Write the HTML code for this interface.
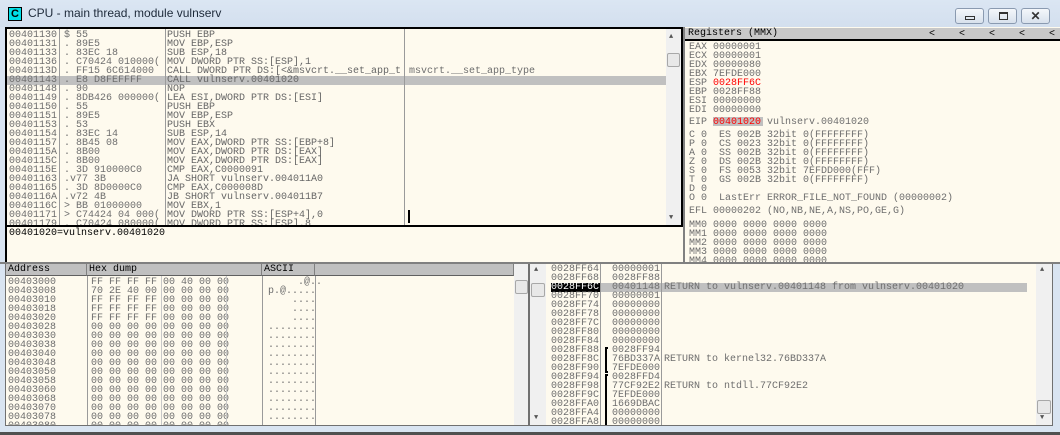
<!DOCTYPE html><html><head><style>
*{margin:0;padding:0;box-sizing:border-box}
body{width:1060px;height:435px;background:#d9e4f1;position:relative;overflow:hidden;font-family:"Liberation Mono",monospace;font-size:10px;color:#707070}
.abs{position:absolute}
.pane{position:absolute;background:#fefaee;overflow:hidden}
pre{font-family:"Liberation Mono",monospace;font-size:10px;line-height:9px;white-space:pre;position:absolute;color:#6e6e6e}
.vl{position:absolute;width:1px;background:#9a9a9a}
.sb{position:absolute;background:#f0f0f0}
.thumb{position:absolute;background:#e8e8e8;border:1px solid #a8a8a8;border-radius:2px}
.hdr{position:absolute;background:#c0c0c0;height:12px;top:0;border-right:1px solid #808080;border-bottom:1px solid #606060;font-size:10px;line-height:11px;color:#000;padding-left:2px}
.tb{position:absolute;top:8px;width:29px;height:16px;border:1px solid #8a9ab0;border-radius:3px;background:linear-gradient(#f4f7fb,#d8e1ec)}
</style></head><body>
<div class="abs" style="left:0;top:0;width:1060px;height:27px;background:linear-gradient(#dbe6f3,#d3dfee)"></div>
<div class="abs" style="left:8px;top:7px;width:14px;height:14px;background:#00e0e8;border:1px solid #000;font:bold 11px 'Liberation Sans',sans-serif;color:#000;text-align:center;line-height:12px">C</div>
<div class="abs" style="left:28px;top:6px;font:12px 'Liberation Sans',sans-serif;color:#1e2a3a">CPU - main thread, module vulnserv</div>
<div class="tb" style="left:955px"><div class="abs" style="left:9px;top:7px;width:10px;height:4px;border:1px solid #333"></div></div>
<div class="tb" style="left:988px"><div class="abs" style="left:10px;top:3px;width:9px;height:8px;border:1px solid #333;border-top-width:2px"></div></div>
<div class="tb" style="left:1021px;font:bold 12px 'Liberation Sans';color:#333;text-align:center;line-height:14px">✕</div>

<!-- disasm -->
<div class="pane" style="left:5px;top:27px;width:678px;height:200px;border:2px solid #000">
<div class="abs" style="left:0;top:47px;width:660px;height:9px;background:#c0c0c0"></div>
<pre style="left:2px;top:2px">00401130
00401131
00401133
00401136
0040113D
00401143
00401148
00401149
00401150
00401151
00401153
00401154
00401157
0040115A
0040115C
0040115E
00401163
00401165
0040116A
0040116C
00401171
00401179</pre>
<div class="vl" style="left:52px;top:0;height:200px"></div>
<pre style="left:57px;top:2px">$ 55
. 89E5
. 83EC 18
. C70424 010000(
. FF15 6C614000
. E8 D8FEFFFF
. 90
. 8DB426 000000(
. 55
. 89E5
. 53
. 83EC 14
. 8B45 08
. 8B00
. 8B00
. 3D 910000C0
.v77 3B
. 3D 8D0000C0
.v72 4B
&gt; BB 01000000
&gt; C74424 04 000(
. C70424 080000(</pre>
<div class="vl" style="left:158px;top:0;height:200px"></div>
<pre style="left:160px;top:2px;color:#666">PUSH EBP
MOV EBP,ESP
SUB ESP,18
MOV DWORD PTR SS:[ESP],1
CALL DWORD PTR DS:[&lt;&amp;msvcrt.__set_app_t
CALL vulnserv.00401020
NOP
LEA ESI,DWORD PTR DS:[ESI]
PUSH EBP
MOV EBP,ESP
PUSH EBX
SUB ESP,14
MOV EAX,DWORD PTR SS:[EBP+8]
MOV EAX,DWORD PTR DS:[EAX]
MOV EAX,DWORD PTR DS:[EAX]
CMP EAX,C0000091
JA SHORT vulnserv.004011A0
CMP EAX,C000008D
JB SHORT vulnserv.004011B7
MOV EBX,1
MOV DWORD PTR SS:[ESP+4],0
MOV DWORD PTR SS:[ESP],8</pre>
<div class="vl" style="left:397px;top:0;height:200px"></div>
<pre style="left:402px;top:38px">msvcrt.__set_app_type</pre>
<div class="abs" style="left:401px;top:181px;width:2px;height:13px;background:#000"></div>
<div class="sb" style="left:659px;top:0;width:15px;height:196px"></div>
<div class="abs" style="left:662px;top:4px;color:#555;font-size:7px">▲</div>
<div class="thumb" style="left:660px;top:24px;width:13px;height:14px"></div>
<div class="abs" style="left:662px;top:185px;color:#555;font-size:7px">▼</div>
</div>
<div class="pane" style="left:5px;top:227px;width:678px;height:35px;border-left:2px solid #000">
<pre style="left:2px;top:2px;color:#000">00401020=vulnserv.00401020</pre>
</div>

<!-- registers -->
<div class="pane" style="left:683px;top:27px;width:377px;height:235px;border-left:2px solid #808080">
<div class="abs" style="left:0;top:1px;width:377px;height:13px;background:#c8c8c8;border-bottom:2px solid #000;color:#000;line-height:12px;padding-left:3px">Registers (MMX)</div>
<pre style="left:244px;top:3px;color:#000">&lt;    &lt;    &lt;    &lt;    &lt;</pre>
<pre style="left:4px;top:16px">EAX 00000001
ECX 00000001
EDX 00000080
EBX 7EFDE000
ESP <span style="color:#f00">0028FF6C</span>
EBP 0028FF88
ESI 00000000
EDI 00000000</pre>
<div class="abs" style="left:28px;top:90px;width:50px;height:9px;background:#c0c0c0"></div>
<pre style="left:4px;top:91px">EIP <span style="color:#f00">00401020</span> vulnserv.00401020</pre>
<pre style="left:4px;top:104px">C 0  ES 002B 32bit 0(FFFFFFFF)
P 0  CS 0023 32bit 0(FFFFFFFF)
A 0  SS 002B 32bit 0(FFFFFFFF)
Z 0  DS 002B 32bit 0(FFFFFFFF)
S 0  FS 0053 32bit 7EFDD000(FFF)
T 0  GS 002B 32bit 0(FFFFFFFF)
D 0
O 0  LastErr ERROR_FILE_NOT_FOUND (00000002)</pre>
<pre style="left:4px;top:180px">EFL 00000202 (NO,NB,NE,A,NS,PO,GE,G)</pre>
<pre style="left:4px;top:194px">MM0 0000 0000 0000 0000
MM1 0000 0000 0000 0000
MM2 0000 0000 0000 0000
MM3 0000 0000 0000 0000
MM4 0000 0000 0000 0000</pre>
</div>
<div class="abs" style="left:0;top:262px;width:1060px;height:2px;background:#808080"></div>

<!-- dump -->
<div class="pane" style="left:5px;top:264px;width:524px;height:162px;border:1px solid #707070;border-top:none">
<div class="hdr" style="left:0;width:81px">Address</div>
<div class="hdr" style="left:81px;width:175px">Hex dump</div>
<div class="hdr" style="left:256px;width:53px">ASCII</div>
<div class="hdr" style="left:309px;width:199px"></div>
<pre style="left:2px;top:14px">00403000
00403008
00403010
00403018
00403020
00403028
00403030
00403038
00403040
00403048
00403050
00403058
00403060
00403068
00403070
00403078
00403080</pre>
<div class="vl" style="left:81px;top:12px;height:150px"></div>
<pre style="left:85px;top:14px">FF FF FF FF 00 40 00 00
70 2E 40 00 00 00 00 00
FF FF FF FF 00 00 00 00
FF FF FF FF 00 00 00 00
FF FF FF FF 00 00 00 00
00 00 00 00 00 00 00 00
00 00 00 00 00 00 00 00
00 00 00 00 00 00 00 00
00 00 00 00 00 00 00 00
00 00 00 00 00 00 00 00
00 00 00 00 00 00 00 00
00 00 00 00 00 00 00 00
00 00 00 00 00 00 00 00
00 00 00 00 00 00 00 00
00 00 00 00 00 00 00 00
00 00 00 00 00 00 00 00
00 00 00 00 00 00 00 00</pre>
<div class="vl" style="left:155px;top:12px;height:150px;background:#c8c8c8"></div>
<div class="vl" style="left:220px;top:12px;height:150px;background:#c8c8c8"></div>
<div class="vl" style="left:256px;top:12px;height:150px"></div>
<pre style="left:262px;top:14px">     .@..
p.@.....
    ....
    ....
    ....
........
........
........
........
........
........
........
........
........
........
........</pre>
<div class="vl" style="left:309px;top:12px;height:150px"></div>
<div class="sb" style="left:508px;top:0;width:15px;height:162px"></div>
<div class="thumb" style="left:509px;top:16px;width:13px;height:14px"></div>
</div>

<!-- stack -->
<div class="pane" style="left:529px;top:264px;width:524px;height:162px;border:1px solid #707070;border-top:none">
<div class="sb" style="left:0;top:0;width:16px;height:162px"></div>
<div class="abs" style="left:4px;top:2px;color:#555;font-size:7px">▲</div>
<div class="thumb" style="left:1px;top:19px;width:14px;height:14px"></div>
<div class="abs" style="left:4px;top:150px;color:#555;font-size:7px">▼</div>
<div class="abs" style="left:21px;top:19px;width:50px;height:9px;background:#000"></div>
<div class="abs" style="left:71px;top:19px;width:426px;height:9px;background:#c0c0c0"></div>
<pre style="left:21px;top:1px">0028FF64
0028FF68
<span style="color:#fff">0028FF6C</span>
0028FF70
0028FF74
0028FF78
0028FF7C
0028FF80
0028FF84
0028FF88
0028FF8C
0028FF90
0028FF94
0028FF98
0028FF9C
0028FFA0
0028FFA4
0028FFA8</pre>
<div class="vl" style="left:70px;top:0;height:162px"></div>
<pre style="left:82px;top:1px">00000001
0028FF88
00401148
00000001
00000000
00000000
00000000
00000000
00000000
0028FF94
76BD337A
7EFDE000
0028FFD4
77CF92E2
7EFDE000
1669DBAC
00000000
00000000</pre>
<div class="abs" style="left:75px;top:83px;width:3px;height:26px;border:2px solid #000;border-right:none"></div>
<div class="abs" style="left:75px;top:110px;width:3px;height:52px;border:2px solid #000;border-right:none;border-bottom:none"></div>
<div class="vl" style="left:131px;top:0;height:162px"></div>
<pre style="left:134px;top:19px">RETURN to vulnserv.00401148 from vulnserv.00401020</pre>
<pre style="left:134px;top:91px">RETURN to kernel32.76BD337A</pre>
<pre style="left:134px;top:118px">RETURN to ntdll.77CF92E2</pre>
<div class="sb" style="left:506px;top:0;width:16px;height:162px"></div>
<div class="abs" style="left:510px;top:2px;color:#555;font-size:7px">▲</div>
<div class="thumb" style="left:507px;top:136px;width:14px;height:14px"></div>
<div class="abs" style="left:510px;top:150px;color:#555;font-size:7px">▼</div>
</div>
<div class="abs" style="left:0;top:432px;width:1060px;height:3px;background:#505050"></div>
</body></html>
